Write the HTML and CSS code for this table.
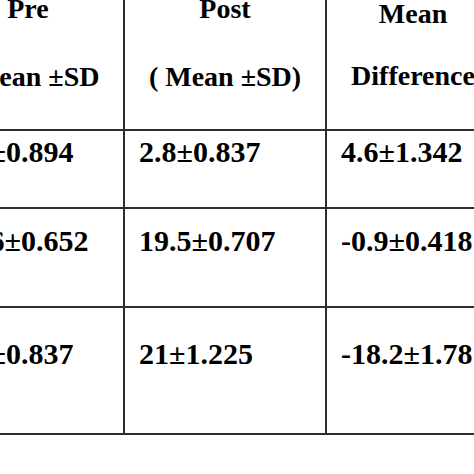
FILE: index.html
```html
<!DOCTYPE html>
<html lang="en">
<head>
<meta charset="utf-8">
<title>Mean scores</title>
<link rel="stylesheet" href="styles.css">
</head>
<body>
<table class="results">
  <thead>
    <tr class="row-head">
      <th class="cell c1 head"><span class="line">Pre</span><span class="line second">( Mean ±SD</span></th>
      <th class="cell c2 head"><span class="line">Post</span><span class="line second">( Mean ±SD)</span></th>
      <th class="cell c3 head head-diff"><span class="line">Mean</span><span class="line second">Difference</span></th>
    </tr>
  </thead>
  <tbody>
    <tr>
      <td class="cell c1 data r1">7.4±0.894</td>
      <td class="cell c2 data r1">2.8±0.837</td>
      <td class="cell c3 data r1">4.6±1.342</td>
    </tr>
    <tr>
      <td class="cell c1 data r2">18.6±0.652</td>
      <td class="cell c2 data r2">19.5±0.707</td>
      <td class="cell c3 data r2">-0.9±0.418</td>
    </tr>
    <tr>
      <td class="cell c1 data r3">2.8±0.837</td>
      <td class="cell c2 data r3">21±1.225</td>
      <td class="cell c3 data r3">-18.2±1.78</td>
    </tr>
  </tbody>
</table>
</body>
</html>
```
FILE: styles.css
```css
html, body {
  margin: 0;
  padding: 0;
  background: #ffffff;
  overflow: hidden;
}

body {
  width: 474px;
  height: 474px;
  font-family: "Liberation Serif", "Times New Roman", serif;
  font-weight: bold;
  color: #000000;
}

.results {
  border-collapse: separate;
  border-spacing: 0;
  table-layout: fixed;
  width: 565px;
  margin-left: -64px;
  margin-top: -20px;
}

.cell {
  box-sizing: border-box;
  border-right: 2px solid #2e2e2e;
  border-bottom: 2px solid #2e2e2e;
  padding: 0;
}

.c1 {
  width: 189px;
  border-left: 2px solid #2e2e2e;
}

.c2 {
  width: 202px;
}

.c3 {
  width: 174px;
}

.head {
  height: 151px;
  vertical-align: top;
  text-align: center;
  font-size: 28px;
  line-height: 32px;
  font-weight: bold;
  padding-top: 13px;
  white-space: nowrap;
}

.head.c1 {
  padding-right: 5px;
}

.head-diff {
  padding-top: 18px;
}

.line {
  display: block;
}

.second {
  margin-top: 36px;
}

.head-diff .second {
  margin-top: 30px;
}

.data {
  vertical-align: middle;
  text-align: left;
  font-size: 30px;
  line-height: 34px;
  padding-left: 14px;
  padding-bottom: 34px;
  white-space: nowrap;
}

.r1 {
  height: 78px;
}

.r2 {
  height: 99px;
}

.r3 {
  height: 127px;
}
```
